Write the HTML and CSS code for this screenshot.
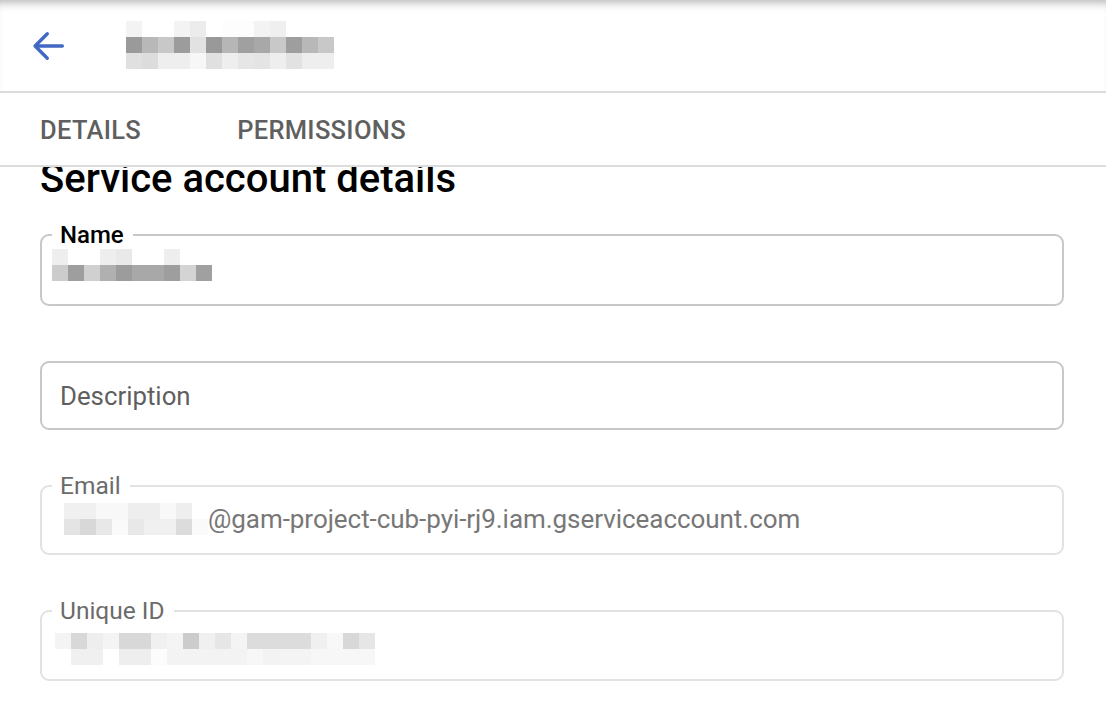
FILE: index.html
```html
<!DOCTYPE html>
<html lang="en">
<head>
<meta charset="utf-8">
<title>Service account details</title>
<link rel="stylesheet" href="styles.css">
</head>
<body>
<header class="topbar">
  <button class="back" aria-label="Back">
    <svg viewBox="0 0 24 24" width="42" height="42"><path d="M20.2 12H4.6M11.6 5L4.6 12l7 7" fill="none" stroke="#4168c4" stroke-width="1.9" stroke-linecap="round" stroke-linejoin="round"/></svg>
  </button>
  <div class="mosaic title-mosaic" style="grid-template-columns:repeat(13,16px)">
    <i style="background:#f3f3f3"></i><i style="background:#fff"></i><i style="background:#fff"></i><i style="background:#f3f3f3"></i><i style="background:#ececec"></i><i style="background:#fff"></i><i style="background:#fdfdfd"></i><i style="background:#fdfdfd"></i><i style="background:#f3f3f3"></i><i style="background:#efefef"></i><i style="background:#fff"></i><i style="background:#fff"></i><i style="background:#fff"></i>
    <i style="background:#9a9a9a"></i><i style="background:#b8b8b8"></i><i style="background:#c8c8c8"></i><i style="background:#9c9c9c"></i><i style="background:#e2e2e2"></i><i style="background:#999"></i><i style="background:#b6b6b6"></i><i style="background:#a0a0a0"></i><i style="background:#a8a8a8"></i><i style="background:#c8c8c8"></i><i style="background:#9e9e9e"></i><i style="background:#b8b8b8"></i><i style="background:#c8c8c8"></i>
    <i style="background:#e0e0e0"></i><i style="background:#dcdcdc"></i><i style="background:#eeeeee"></i><i style="background:#eeeeee"></i><i style="background:#f7f7f7"></i><i style="background:#e0e0e0"></i><i style="background:#eeeeee"></i><i style="background:#e6e6e6"></i><i style="background:#e4e4e4"></i><i style="background:#eeeeee"></i><i style="background:#e2e2e2"></i><i style="background:#eeeeee"></i><i style="background:#eeeeee"></i>
  </div>
</header>
<nav class="tabs">
  <span class="tab">DETAILS</span>
  <span class="tab">PERMISSIONS</span>
</nav>
<main class="content">
  <h1 class="heading">Service account details</h1>

  <fieldset class="field field-name">
    <legend class="label label-strong">Name</legend>
    <div class="value value-name">
      <div class="mosaic" style="grid-template-columns:repeat(10,16px)">
        <i style="background:#eeeeee"></i><i style="background:#fff"></i><i style="background:#fff"></i><i style="background:#eeeeee"></i><i style="background:#e9e9e9"></i><i style="background:#fff"></i><i style="background:#fff"></i><i style="background:#eeeeee"></i><i style="background:#fff"></i><i style="background:#fff"></i>
        <i style="background:#cccccc"></i><i style="background:#9e9e9e"></i><i style="background:#d0d0d0"></i><i style="background:#b0b0b0"></i><i style="background:#9c9c9c"></i><i style="background:#a8a8a8"></i><i style="background:#a8a8a8"></i><i style="background:#9e9e9e"></i><i style="background:#d4d4d4"></i><i style="background:#a0a0a0"></i>
      </div>
    </div>
  </fieldset>

  <fieldset class="field field-desc">
    <div class="value value-desc">Description</div>
  </fieldset>

  <fieldset class="field field-disabled">
    <legend class="label">Email</legend>
    <div class="value value-email">
      <div class="mosaic" style="grid-template-columns:repeat(9,16px)">
        <i style="background:#f0f0f0"></i><i style="background:#f0f0f0"></i><i style="background:#f8f8f8"></i><i style="background:#f8f8f8"></i><i style="background:#eeeeee"></i><i style="background:#eeeeee"></i><i style="background:#f8f8f8"></i><i style="background:#eeeeee"></i><i style="background:#fff"></i>
        <i style="background:#e4e4e4"></i><i style="background:#d8d8d8"></i><i style="background:#e8e8e8"></i><i style="background:#fafafa"></i><i style="background:#e8e8e8"></i><i style="background:#f0f0f0"></i><i style="background:#f0f0f0"></i><i style="background:#dcdcdc"></i><i style="background:#fafafa"></i>
      </div>
      <span class="email-text">@gam-project-cub-pyi-rj9.iam.gserviceaccount.com</span>
    </div>
  </fieldset>

  <fieldset class="field field-disabled">
    <legend class="label">Unique ID</legend>
    <div class="value value-id">
      <div class="mosaic" style="grid-template-columns:repeat(20,16px)">
        <i style="background:#f4f4f4"></i><i style="background:#d8d8d8"></i><i style="background:#eeeeee"></i><i style="background:#f4f4f4"></i><i style="background:#d8d8d8"></i><i style="background:#d8d8d8"></i><i style="background:#f0f0f0"></i><i style="background:#f4f4f4"></i><i style="background:#cccccc"></i><i style="background:#f0f0f0"></i><i style="background:#e6e6e6"></i><i style="background:#f4f4f4"></i><i style="background:#dcdcdc"></i><i style="background:#dcdcdc"></i><i style="background:#dcdcdc"></i><i style="background:#dcdcdc"></i><i style="background:#f0f0f0"></i><i style="background:#f8f8f8"></i><i style="background:#d8d8d8"></i><i style="background:#e6e6e6"></i>
        <i style="background:#fff"></i><i style="background:#f0f0f0"></i><i style="background:#f0f0f0"></i><i style="background:#fff"></i><i style="background:#eeeeee"></i><i style="background:#eeeeee"></i><i style="background:#fcfcfc"></i><i style="background:#f3f3f3"></i><i style="background:#f3f3f3"></i><i style="background:#f3f3f3"></i><i style="background:#f3f3f3"></i><i style="background:#f3f3f3"></i><i style="background:#f7f7f7"></i><i style="background:#f3f3f3"></i><i style="background:#f4f4f4"></i><i style="background:#f4f4f4"></i><i style="background:#f7f7f7"></i><i style="background:#f7f7f7"></i><i style="background:#f7f7f7"></i><i style="background:#f7f7f7"></i>
      </div>
    </div>
  </fieldset>
</main>
</body>
</html>
```

FILE: styles.css
```css
* { box-sizing: border-box; }
html, body {
  margin: 0;
  padding: 0;
  background: #fff;
  font-family: Roboto, "Liberation Sans", Arial, sans-serif;
  color: #202124;
  overflow: hidden;
}

.topbar {
  height: 93px;
  display: flex;
  align-items: center;
  border-bottom: 2px solid #dcdcdc;
  box-shadow: inset 0 9px 8px -6px rgba(0, 0, 0, 0.28);
  padding-left: 27px;
}

.back {
  border: 0;
  background: none;
  padding: 0;
  width: 42px;
  height: 42px;
  display: flex;
  margin-top: 1px;
}

.title-mosaic {
  margin-left: 57px;
  margin-top: -2px;
}

.mosaic {
  display: grid;
  grid-auto-rows: 16px;
  flex: none;
}
.mosaic i { display: block; }

.tabs {
  height: 74px;
  display: flex;
  align-items: center;
  gap: 96px;
  padding-left: 40px;
  border-bottom: 2px solid #dcdcdc;
}

.tab {
  font-size: 25.5px;
  font-weight: 500;
  color: #5f5f5f;
  letter-spacing: 0.3px;
  padding-top: 1px;
}

.content {
  overflow: hidden;
  padding: 0 42px 0 40px;
}

.heading {
  margin: -12px 0 18px;
  font-size: 40px;
  line-height: 48px;
  font-weight: 500;
  color: #000;
}

.field {
  margin: 0;
  padding: 0 10px 0 10px;
  border: 2px solid #c8c8c8;
  border-radius: 9px;
  min-inline-size: 0;
  width: 1024px;
}

.field-disabled {
  border-color: #e2e2e2;
  margin-top: 42px;
}

.field-desc { margin-top: 55px; }

.label {
  font-size: 24px;
  line-height: 28px;
  padding: 0 9px 0 8px;
  color: #6b6b6b;
}

.label-strong {
  color: #000;
  font-weight: 500;
}

.field-disabled .label { font-size: 24.5px; }

.value {
  display: flex;
  align-items: flex-start;
}

.value-name { height: 55px; }

.value-desc {
  height: 65px;
  align-items: center;
  padding-left: 8px;
  font-size: 25.8px;
  color: #5f5f5f;
}

.value-email {
  height: 53px;
  padding-top: 3px;
  padding-left: 12px;
}

.email-text {
  font-size: 26px;
  line-height: 32px;
  color: #777;
  letter-spacing: -0.05px;
}

.value-id {
  height: 54px;
  padding-top: 8px;
  padding-left: 3px;
}
```
